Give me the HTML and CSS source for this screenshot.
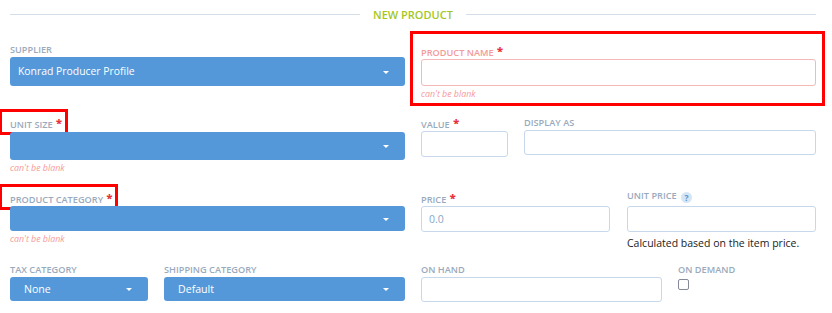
FILE: index.html
```html
<!DOCTYPE html>
<html lang="en">
<head>
    <meta charset="UTF-8">
    <meta name="viewport" content="width=device-width, initial-scale=1.0">
    <title>New product</title>
<link rel="stylesheet" href="styles.css">
</head>
<body>
    <div class="form-wrap">
        <header class="legend">
            <span class="legend-line"></span>
            <h2>New Product</h2>
            <span class="legend-line"></span>
        </header>

        <div class="row row-1">
            <div class="field">
                <label>Supplier</label>
                <div class="select tall">Konrad Producer Profile</div>
            </div>
            <div class="field has-error boxed">
                <label>Product name <b>*</b></label>
                <input type="text" class="text-input">
                <div class="error">can't be blank</div>
            </div>
        </div>

        <div class="row row-2">
            <div class="field">
                <label class="marked unit-mark">Unit size <b>*</b></label>
                <div class="select tall"></div>
                <div class="error">can't be blank</div>
            </div>
            <div class="split split-value">
                <div class="field">
                    <label>Value <b>*</b></label>
                    <input type="text" class="text-input">
                </div>
                <div class="field display-as">
                    <label>Display as</label>
                    <input type="text" class="text-input">
                </div>
            </div>
        </div>

        <div class="row row-3">
            <div class="field">
                <label class="marked cat-mark">Product category <b>*</b></label>
                <div class="select"></div>
                <div class="error">can't be blank</div>
            </div>
            <div class="split split-price">
                <div class="field">
                    <label>Price <b>*</b></label>
                    <input type="text" class="text-input" placeholder="0.0">
                </div>
                <div class="field unit-price">
                    <label>Unit price <span class="help">?</span></label>
                    <input type="text" class="text-input">
                    <div class="hint">Calculated based on the item price.</div>
                </div>
            </div>
        </div>

        <div class="row row-4">
            <div class="split split-tax">
                <div class="field">
                    <label>Tax category</label>
                    <div class="select short">None</div>
                </div>
                <div class="field">
                    <label>Shipping category</label>
                    <div class="select short">Default</div>
                </div>
            </div>
            <div class="split split-stock">
                <div class="field">
                    <label>On hand</label>
                    <input type="text" class="text-input">
                </div>
                <div class="field">
                    <label>On demand</label>
                    <input type="checkbox" class="check">
                </div>
            </div>
        </div>
    </div>
</body>
</html>
```

FILE: styles.css
```css
*, *::before, *::after{
    margin    : 0;
    padding   : 0;
    box-sizing: border-box;
}

body{
    font-family     : "Open Sans", "DejaVu Sans", sans-serif;
    background-color: white;
    color           : #222;
}

.form-wrap{
    width  : 826px;
    padding: 0 10px;
}

/* legend */
.legend{
    display    : flex;
    align-items: center;
    height     : 28px;
    gap        : 13px;
}
.legend-line{
    flex            : 1;
    height          : 1px;
    background-color: #d3dee8;
}
.legend h2{
    font-size     : 11px;
    font-weight   : 600;
    color         : #a5c71c;
    text-transform: uppercase;
}

/* rows */
.row{
    display              : grid;
    grid-template-columns: 395px 395px;
    column-gap           : 16px;
    align-items          : start;
}
.row-1{ margin-top: 16px; }
.row-2{ margin-top: 18px; }
.row-3{ margin-top: 19px; }
.row-4{ margin-top: 14px; }

.split{
    display    : grid;
    column-gap : 16px;
    align-items: start;
}
.split-value{ grid-template-columns: 87px 1fr; }
.split-price{ grid-template-columns: 189px 189px; column-gap: 17px; }
.split-tax  { grid-template-columns: 138px 241px; }
.split-stock{ grid-template-columns: 241px 138px; }

/* fields */
.field{
    position      : relative;
    display       : flex;
    flex-direction: column;
}
.field label{
    flex-shrink   : 0;
    height        : 12px;
    font-size     : 9.2px;
    line-height   : 12px;
    font-weight   : 600;
    color         : #9aaabd;
    text-transform: uppercase;
    margin-bottom : 1px;
    white-space   : nowrap;
}
.field label b{
    color         : #e8323c;
    font-size     : 11px;
    line-height   : 10px;
    margin-left   : 1px;
    vertical-align: 1px;
}

.select{
    position        : relative;
    height          : 25px;
    background-color: #5498da;
    border-radius   : 3px;
    color           : white;
    font-size       : 10.4px;
    line-height     : 25px;
    padding-left    : 8px;
}
.select::after{
    content     : "";
    position    : absolute;
    right       : 16px;
    top         : 50%;
    margin-top  : -1px;
    border-left : 3px solid transparent;
    border-right: 3px solid transparent;
    border-top  : 3px solid white;
}
.select.tall{
    height     : 29px;
    line-height: 29px;
}
.select.short{
    height      : 24px;
    line-height : 24px;
    padding-left: 14px;
    font-size   : 10.6px;
}

.text-input{
    height       : 26px;
    border       : 1px solid #c8d8ec;
    border-radius: 3px;
    outline      : none;
    padding      : 0 7px;
    font-family  : inherit;
    font-size    : 10.5px;
    color        : #222;
}
.text-input::placeholder{
    color: #8aa6c8;
}

.has-error label{
    color: #f39a9a;
}
.has-error .text-input{
    border-color: #f4b8b8;
    height      : 27px;
}
.error{
    font-size  : 8.8px;
    line-height: 12px;
    font-style : italic;
    color      : #f59a9a;
    margin-top : 2px;
}

/* annotation boxes */
.boxed{
    padding-top: 2px;
}
.boxed::before{
    content : "";
    position: absolute;
    left    : -11px;
    right   : -9px;
    top     : -13px;
    bottom  : -6px;
    border  : 3px solid #f00;
}
.marked{
    position: relative;
}
.marked::before{
    content : "";
    position: absolute;
    left    : -11px;
    top     : -9px;
    bottom  : -5px;
    border  : 3px solid #f00;
}
.unit-mark::before{ width: 69px; }
.cat-mark::before { width: 119px; }

.row-2 .select.tall{ margin-top: 1px; height: 28px; line-height: 28px; }
.display-as{ margin-top: -1px; }
.display-as .text-input{ height: 25px; }

.unit-price{ margin-top: -3px; }
.unit-price .text-input{ margin-top: 3px; }
.help{
    display         : inline-block;
    width           : 11px;
    height          : 11px;
    border-radius   : 50%;
    background-color: #d6e5f4;
    color           : #4f93d6;
    font-size       : 8.5px;
    line-height     : 11px;
    text-align      : center;
    font-weight     : 700;
    margin-left     : 2px;
    vertical-align  : -2px;
}
.hint{
    font-size  : 10.5px;
    line-height: 14px;
    margin-top : 4px;
    color      : #222;
    white-space: nowrap;
}

.split-stock .text-input{ height: 25px; }
.check{
    width        : 11px;
    height       : 11px;
    margin-top   : 2px;
    appearance   : none;
    border       : 1px solid #858a99;
    border-radius: 2px;
    background   : white;
}
```
